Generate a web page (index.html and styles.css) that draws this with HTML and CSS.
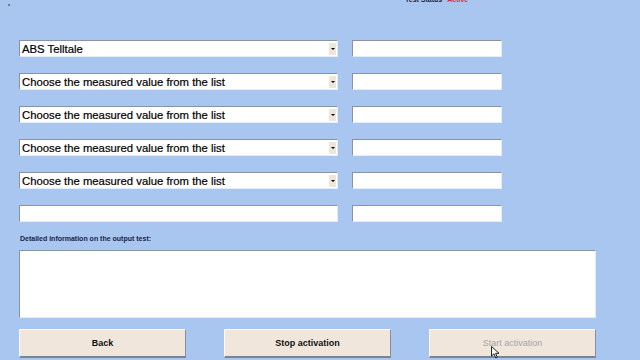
FILE: index.html
```html
<!DOCTYPE html>
<html lang="en">
<head>
    <meta charset="UTF-8">
    <link rel="stylesheet" href="styles.css">
    <title>Output Test</title>
</head>
<body>
    <div class="status">
        <span class="status-label">Test Status</span>
        <span class="status-value">Active</span>
    </div>
    <span class="dot"></span>

    <div class="page">
        <div class="rows">
            <div class="row">
                <div class="combo"><span class="combo-text">ABS Telltale</span><span class="combo-arrow"></span></div>
                <div class="field"></div>
            </div>
            <div class="row">
                <div class="combo"><span class="combo-text">Choose the measured value from the list</span><span class="combo-arrow"></span></div>
                <div class="field"></div>
            </div>
            <div class="row">
                <div class="combo"><span class="combo-text">Choose the measured value from the list</span><span class="combo-arrow"></span></div>
                <div class="field"></div>
            </div>
            <div class="row">
                <div class="combo"><span class="combo-text">Choose the measured value from the list</span><span class="combo-arrow"></span></div>
                <div class="field"></div>
            </div>
            <div class="row">
                <div class="combo"><span class="combo-text">Choose the measured value from the list</span><span class="combo-arrow"></span></div>
                <div class="field"></div>
            </div>
            <div class="row">
                <div class="combo"></div>
                <div class="field"></div>
            </div>
        </div>

        <p class="info-label">Detailed information on the output test:</p>
        <div class="info-box"></div>

        <div class="buttons">
            <div class="btn">Back</div>
            <div class="btn">Stop activation</div>
            <div class="btn btn-disabled">Start activation
                <svg class="cursor" width="9" height="13" viewBox="0 0 9 13">
                    <path d="M0.5 0.5 L0.5 10 L3 7.8 L4.8 12 L6.3 11.3 L4.6 7.3 L8 7.3 Z" fill="#fff" stroke="#222" stroke-width="1"/>
                </svg>
            </div>
        </div>
    </div>
</body>
</html>
```

FILE: styles.css
```css
body {
    margin: 0;
    background: #a9c6f1;
    font-family: "Liberation Sans", Arial, sans-serif;
    height: 360px;
    overflow: hidden;
}

.status {
    display: flex;
    gap: 5px;
    margin-top: -4px;
    padding-left: 405px;
    height: 8px;
    font-size: 7px;
    line-height: 8px;
    font-weight: bold;
}

.status-label {
    color: #1b2440;
}

.status-value {
    color: #e0283c;
}

.dot {
    position: absolute;
    left: 8px;
    top: 4px;
    width: 2px;
    height: 2px;
    background: #6f7f9a;
}

.page {
    padding: 36px 0 0 19px;
    width: 577px;
}

.rows {
    display: flex;
    flex-direction: column;
    gap: 16px;
}

.row {
    display: flex;
    gap: 14px;
}

.combo {
    width: 317px;
    height: 15px;
    background: #fff;
    border-top: 1px solid #8a93a6;
    border-left: 1px solid #8a93a6;
    border-bottom: 1px solid #e4ecf8;
    border-right: 1px solid #e4ecf8;
    display: flex;
    align-items: center;
    justify-content: space-between;
}

.combo-text {
    padding-left: 2px;
    font-size: 11.3px;
    color: #000;
    -webkit-text-stroke: 0.2px #000;
}

.combo-arrow {
    width: 7px;
    height: 12px;
    margin-right: 1px;
    background: #ece6dc;
    position: relative;
}

.combo-arrow::after {
    content: "";
    position: absolute;
    left: 2px;
    top: 5px;
    border-left: 2px solid transparent;
    border-right: 2px solid transparent;
    border-top: 2px solid #000;
}

.field {
    width: 148px;
    height: 15px;
    background: #fff;
    border-top: 1px solid #8a93a6;
    border-left: 1px solid #8a93a6;
    border-bottom: 1px solid #e4ecf8;
    border-right: 1px solid #e4ecf8;
}

.info-label {
    margin: 13px 0 0 1px;
    height: 9px;
    font-size: 7px;
    font-weight: bold;
    color: #17254a;
}

.info-box {
    margin-top: 6px;
    width: 575px;
    height: 66px;
    background: #fff;
    border-top: 1px solid #8a93a6;
    border-left: 1px solid #8a93a6;
    border-bottom: 1px solid #e4ecf8;
    border-right: 1px solid #e4ecf8;
}

.buttons {
    margin-top: 11px;
    display: flex;
    justify-content: space-between;
}

.btn {
    position: relative;
    width: 165px;
    height: 26px;
    background: #f1e6dc;
    border-top: 1px solid #fdfaf6;
    border-left: 1px solid #fdfaf6;
    border-right: 1px solid #8d8f98;
    border-bottom: 2px solid #7f838e;
    display: flex;
    align-items: center;
    justify-content: center;
    font-size: 9px;
    font-weight: bold;
    color: #111;
}

.btn-disabled {
    color: #a6a3a3;
    font-weight: normal;
}

.cursor {
    position: absolute;
    left: 61px;
    top: 16px;
}
```
